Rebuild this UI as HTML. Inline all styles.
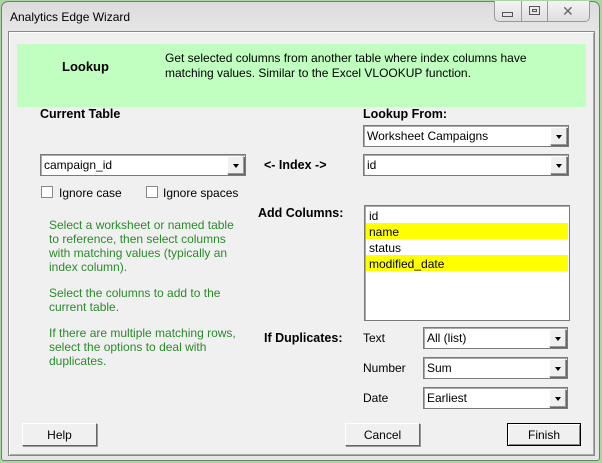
<!DOCTYPE html>
<html><head><meta charset="utf-8"><style>
*{box-sizing:border-box;margin:0;padding:0}
body{width:602px;height:463px;overflow:hidden;background:#a8d8a0;font-family:"Liberation Sans",sans-serif;font-size:12px;color:#000;position:relative}
.a{position:absolute;white-space:nowrap}
.win{position:absolute;left:1px;top:1px;width:599px;height:460px;border:1px solid #6f7f6f;border-radius:7px 7px 3px 3px;background:linear-gradient(#dcdcdc,#e6e6e6 30px,#e6e6e6);}
.frame{position:absolute;left:8px;top:31px;width:587px;height:425px;background:#f0f0f0;border:1px solid #888;box-shadow:inset 1px 1px 0 #fff,inset -1px -1px 0 #aaa}
.b{font-weight:bold}
.combo{position:absolute;background:#fff;border:1px solid #7a7a7a;box-shadow:inset 1px 1px 0 #aaa;height:22px;padding:3px 0 0 3px}
.combo .arr{position:absolute;right:1px;top:1px;width:17px;height:18px;background:#f0f0f0;border:1px solid #999;border-top-color:#fff;border-left-color:#fff;box-shadow:1px 1px 0 #666}
.combo .arr:after{content:"";position:absolute;left:5px;top:7px;border-left:3.5px solid transparent;border-right:3.5px solid transparent;border-top:4px solid #000}
.btn{position:absolute;height:23px;background:#f0f0f0;border:1px solid #fff;border-right-color:#666;border-bottom-color:#666;box-shadow:1px 1px 0 #999;text-align:center;padding-top:4px;color:#000}
.chk{position:absolute;width:12px;height:12px;background:#fff;border:1px solid #888}
.g{color:#2a8a2a;line-height:14px}
</style></head><body>
<div class="win"></div>
<div class="a" style="left:10px;top:10px;font-size:12px">Analytics Edge Wizard</div>
<div class="a" style="left:494px;top:1px;width:96px;height:21px;border:1px solid #999;border-top:none;border-radius:0 0 5px 5px;background:linear-gradient(#f4f4f4,#dedede)"></div>
<div class="a" style="left:521px;top:1px;width:1px;height:21px;background:#999"></div>
<div class="a" style="left:547px;top:1px;width:1px;height:21px;background:#999"></div>
<div class="a" style="left:502px;top:12px;width:11px;height:5px;border:1px solid #555"></div>
<div class="a" style="left:529px;top:6px;width:11px;height:9px;border:1px solid #555"></div>
<div class="a" style="left:532px;top:9px;width:5px;height:3px;border:1px solid #555"></div>
<div class="a" style="left:562px;top:3px;font-size:14px;color:#666">✕</div>
<div class="frame"></div>
<div class="a" style="left:17px;top:44px;width:569px;height:63px;background:#c0ffc0"></div>
<div class="a b" style="left:62px;top:59px;font-size:13px">Lookup</div>
<div class="a" style="left:165px;top:51px;line-height:15px">Get selected columns from another table where index columns have<br>matching values. Similar to the Excel VLOOKUP function.</div>

<div class="a b" style="left:40px;top:107px;font-size:12.5px">Current Table</div>
<div class="combo" style="left:40px;top:154px;width:206px">campaign_id<div class="arr"></div></div>
<div class="chk" style="left:41px;top:186px"></div>
<div class="a" style="left:59px;top:186px">Ignore case</div>
<div class="chk" style="left:146px;top:186px"></div>
<div class="a" style="left:163px;top:186px">Ignore spaces</div>
<div class="a g" style="left:49px;top:218px">Select a worksheet or named table<br>to reference, then select columns<br>with matching values (typically an<br>index column).</div>
<div class="a g" style="left:49px;top:286px">Select the columns to add to the<br>current table.</div>
<div class="a g" style="left:49px;top:326px">If there are multiple matching rows,<br>select the options to deal with<br>duplicates.</div>

<div class="a b" style="left:264px;top:158px;font-size:12.5px">&lt;- Index -&gt;</div>
<div class="a b" style="left:258px;top:206px;font-size:12.5px">Add Columns:</div>
<div class="a b" style="left:264px;top:331px;font-size:12.5px">If Duplicates:</div>

<div class="a b" style="left:363px;top:107px;font-size:12.5px">Lookup From:</div>
<div class="combo" style="left:363px;top:125px;width:206px">Worksheet Campaigns<div class="arr"></div></div>
<div class="combo" style="left:363px;top:154px;width:206px">id<div class="arr"></div></div>
<div class="a" style="left:364px;top:205px;width:206px;height:116px;background:#fff;border:1px solid #7a7a7a;box-shadow:inset 1px 1px 0 #aaa;padding:1px">
<div style="height:16px;padding:2px 0 0 3px">id</div>
<div style="height:16px;padding:2px 0 0 3px;background:#ffff00">name</div>
<div style="height:16px;padding:2px 0 0 3px">status</div>
<div style="height:16px;padding:2px 0 0 3px;background:#ffff00">modified_date</div>
</div>

<div class="a" style="left:363px;top:331px">Text</div>
<div class="a" style="left:363px;top:361px">Number</div>
<div class="a" style="left:363px;top:391px">Date</div>
<div class="combo" style="left:423px;top:327px;width:145px">All (list)<div class="arr"></div></div>
<div class="combo" style="left:423px;top:357px;width:145px">Sum<div class="arr"></div></div>
<div class="combo" style="left:423px;top:387px;width:145px">Earliest<div class="arr"></div></div>

<div class="btn" style="left:22px;top:423px;width:75px">Help</div>
<div class="btn" style="left:345px;top:423px;width:75px">Cancel</div>
<div class="btn" style="left:507px;top:423px;width:74px;border:1px solid #000;box-shadow:inset 1px 1px 0 #fff,inset -1px -1px 0 #888">Finish</div>
</body></html>
